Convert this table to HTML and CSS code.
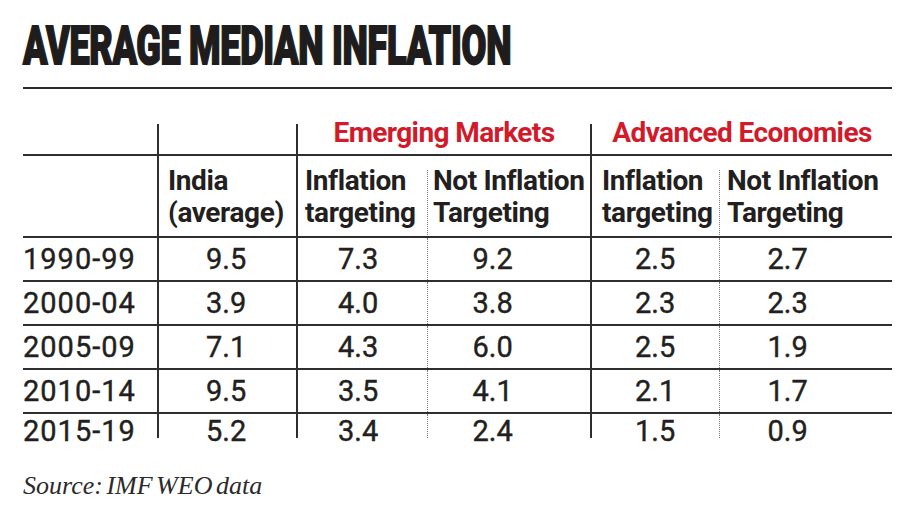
FILE: index.html
```html
<!DOCTYPE html>
<html lang="en">
<head>
<meta charset="utf-8">
<title>Average Median Inflation</title>
<link rel="stylesheet" href="styles.css">
</head>
<body>
<div class="page">
  <div class="title-bar"><h1 class="title">AVERAGE MEDIAN INFLATION</h1></div>
  <table class="grid">
    <colgroup>
      <col class="c0"><col class="c1"><col class="c2"><col class="c3"><col class="c4"><col class="c5">
    </colgroup>
    <thead>
      <tr class="group-row">
        <th></th>
        <th class="solid"></th>
        <th class="solid group" colspan="2">Emerging Markets</th>
        <th class="solid group" colspan="2">Advanced Economies</th>
      </tr>
      <tr class="head-row">
        <th></th>
        <th class="solid h1">India<br>(average)</th>
        <th class="solid h2">Inflation<br>targeting</th>
        <th class="dot h3">Not Inflation<br>Targeting</th>
        <th class="solid h4">Inflation<br>targeting</th>
        <th class="dot h5">Not Inflation<br>Targeting</th>
      </tr>
    </thead>
    <tbody>
      <tr>
        <td class="yr">1990-99</td><td class="solid v1">9.5</td><td class="solid v2">7.3</td><td class="dot v3">9.2</td><td class="solid v4">2.5</td><td class="dot v5">2.7</td>
      </tr>
      <tr>
        <td class="yr">2000-04</td><td class="solid v1">3.9</td><td class="solid v2">4.0</td><td class="dot v3">3.8</td><td class="solid v4">2.3</td><td class="dot v5">2.3</td>
      </tr>
      <tr>
        <td class="yr">2005-09</td><td class="solid v1">7.1</td><td class="solid v2">4.3</td><td class="dot v3">6.0</td><td class="solid v4">2.5</td><td class="dot v5">1.9</td>
      </tr>
      <tr>
        <td class="yr">2010-14</td><td class="solid v1">9.5</td><td class="solid v2">3.5</td><td class="dot v3">4.1</td><td class="solid v4">2.1</td><td class="dot v5">1.7</td>
      </tr>
      <tr class="last">
        <td class="yr">2015-19</td><td class="solid v1">5.2</td><td class="solid v2">3.4</td><td class="dot v3">2.4</td><td class="solid v4">1.5</td><td class="dot v5">0.9</td>
      </tr>
    </tbody>
  </table>
  <p class="source">Source: IMF WEO data</p>
</div>
</body>
</html>
```

FILE: styles.css
```css
html, body {
  margin: 0;
  padding: 0;
  background: #ffffff;
}

.page {
  width: 869px;
  padding: 19px 0 0 23px;
  color: #231f20;
  font-family: Roboto, "Liberation Sans", sans-serif;
}

.title-bar {
  padding-bottom: 14px;
  border-bottom: 2px solid #2b2b2b;
  margin-bottom: 35px;
}

.title {
  margin: 0;
  display: inline-block;
  font-family: Roboto, "Liberation Sans", sans-serif;
  font-weight: 900;
  font-size: 54px;
  line-height: 54px;
  letter-spacing: -0.5px;
  white-space: nowrap;
  -webkit-text-stroke: 1.8px #1e1c1c;
  transform: scaleX(0.668);
  transform-origin: 0 50%;
  color: #1e1c1c;
}

.grid {
  width: 869px;
  border-collapse: collapse;
  table-layout: fixed;
}

.c0 { width: 135px; }
.c1 { width: 139px; }
.c2 { width: 130px; }
.c3 { width: 164px; }
.c4 { width: 128px; }
.c5 { width: 173px; }

.grid th,
.grid td {
  padding: 0;
  white-space: nowrap;
  text-align: left;
}

.solid { border-left: 2px solid #2e2e2e; }
.dot { border-left: 1px dotted #777777; }

.head-row th.dot {
  border-left: none;
  background:
    linear-gradient(#ffffff, #ffffff) 0 0 / 1px 14px no-repeat,
    linear-gradient(#777777 50%, transparent 50%) 0 0 / 1px 2px repeat-y;
}

.group-row th {
  font-size: 28px;
  font-weight: 700;
  line-height: 18px;
  padding-bottom: 12px;
  letter-spacing: -0.6px;
  color: #d11a2a;
  text-align: center;
  border-bottom: 2px solid #2e2e2e;
}

.head-row th {
  font-size: 28px;
  font-weight: 700;
  line-height: 32px;
  letter-spacing: -0.4px;
  padding-top: 9px;
  padding-bottom: 7px;
  border-bottom: 2px solid #2e2e2e;
  vertical-align: top;
}

.h1 { padding-left: 9px !important; }
.h2 { padding-left: 7px !important; }
.h3 { padding-left: 6px !important; }
.h4 { padding-left: 10px !important; }
.h5 { padding-left: 8px !important; }

.grid td {
  font-size: 29px;
  font-weight: 400;
  -webkit-text-stroke: 0.4px #231f20;
  line-height: 42px;
  border-bottom: 2px solid #2e2e2e;
}

.grid tr.last td {
  border-bottom: none;
  line-height: 14px;
  padding-top: 10px;
}

.yr { letter-spacing: 1px; }
.v1 { padding-left: 47px !important; }
.v2 { padding-left: 40px !important; }
.v3 { padding-left: 45px !important; }
.v4 { padding-left: 43px !important; }
.v5 { padding-left: 48px !important; }

.source {
  margin: 33px 0 0 0;
  font-family: "Liberation Serif", serif;
  font-style: italic;
  font-size: 26px;
  word-spacing: -3px;
  color: #2b2b2b;
}
```
